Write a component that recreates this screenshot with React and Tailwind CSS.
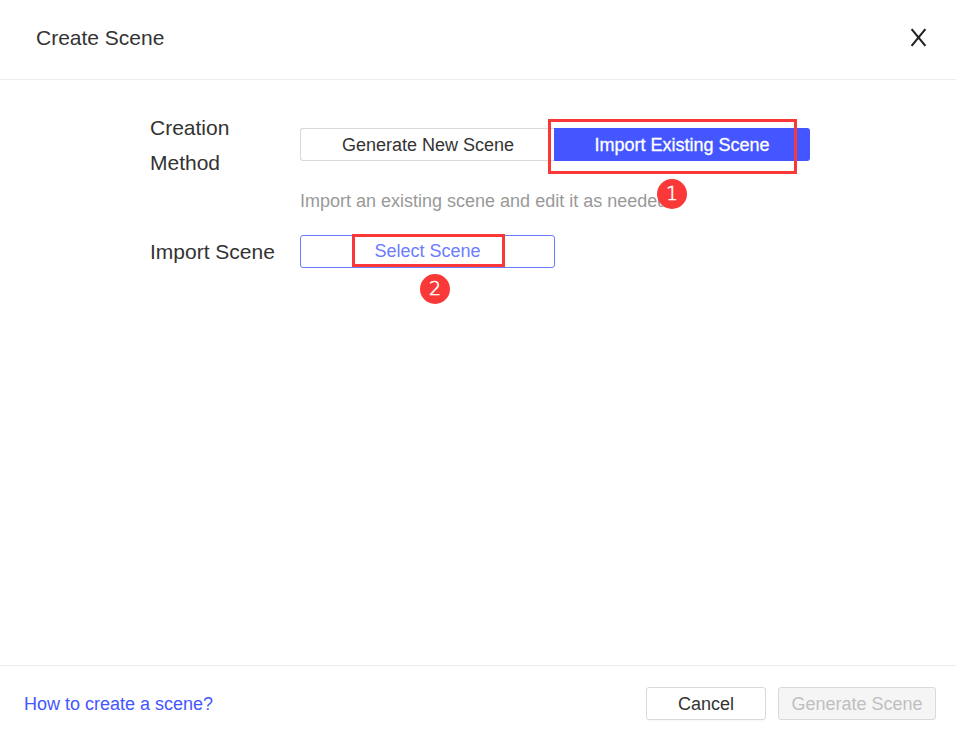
// src/App.jsx
import React from 'react';

// Red outline drawn over the control a step refers to
function Highlight({ className }) {
  return <div className={`pointer-events-none absolute border-3 border-[#fb3838] ${className}`} />;
}

// Numbered step marker
function StepBadge({ number, className }) {
  return (
    <div
      className={`absolute flex h-[30px] w-[30px] items-center justify-center rounded-full bg-[#fb3838] pb-0.5 font-['DejaVu_Sans',sans-serif] text-[19px] leading-none font-extralight text-white [-webkit-text-stroke:0.6px_white] ${className}`}
    >
      {number}
    </div>
  );
}

function Header() {
  return (
    <header className="flex h-20 items-center justify-between border-b border-[#ececec] pr-[29px] pb-1 pl-9">
      <h1 className="text-[21px] leading-8">Create Scene</h1>
      <button type="button" aria-label="Close">
        <svg width="17" height="19" viewBox="0 0 17 19" fill="none" stroke="#222" strokeWidth="2.1">
          <path d="M1.6 1.2 15.4 17.8M15.4 1.2 1.6 17.8" />
        </svg>
      </button>
    </header>
  );
}

function CreationMethod() {
  return (
    <div className="flex">
      <div className="w-[150px] pr-10 text-[21px] leading-[35px]">Creation Method</div>
      <div className="w-[510px] pt-[18px]">
        <div className="relative flex h-[33px]">
          <button type="button" className="w-[254px] rounded-l-[3px] border border-r-0 border-[#d9d9d9] pl-px">
            Generate New Scene
          </button>
          <button type="button" className="flex-1 rounded-r-[3px] bg-[#4456ff] text-white [-webkit-text-stroke:0.3px_white]">
            Import Existing Scene
          </button>
          <Highlight className="top-[-9px] left-[248px] h-[55px] w-[249px]" />
          <StepBadge number={1} className="top-[51px] left-[357px]" />
        </div>
        <p className="mt-[26px] leading-7 text-[#999]">Import an existing scene and edit it as needed.</p>
      </div>
    </div>
  );
}

function ImportScene() {
  return (
    <div className="mt-[19px] flex items-center">
      <div className="w-[150px] text-[21px] leading-[35px]">Import Scene</div>
      <div className="relative h-[33px] w-[255px]">
        <button type="button" className="h-full w-full rounded-[3px] border border-[#6b7cff] pb-0.5 text-[#6b7cff]">
          Select Scene
        </button>
        <Highlight className="top-[-1px] left-[52px] h-[33px] w-[153px]" />
        <StepBadge number={2} className="top-[39px] left-[120px]" />
      </div>
    </div>
  );
}

function Footer() {
  return (
    <footer className="flex h-[68px] items-center justify-between border-t border-[#ececec] pt-2 pr-5 pl-6">
      <a href="#" className="text-[#4456ff]">How to create a scene?</a>
      <div className="flex gap-3">
        <button type="button" className="h-[33px] w-[120px] rounded-[3px] border border-[#d9d9d9] shadow-[0_2px_0_rgba(0,0,0,0.02)]">
          Cancel
        </button>
        <button type="button" disabled className="h-[33px] w-[158px] rounded-[3px] border border-[#d9d9d9] bg-[#f5f5f5] text-[#bfbfbf]">
          Generate Scene
        </button>
      </div>
    </footer>
  );
}

function App() {
  return (
    <div className="flex h-[733px] w-[956px] flex-col bg-white font-['Liberation_Sans',Arial,sans-serif] text-lg text-[#333]">
      <Header />
      <main className="flex-1 pt-[30px] pl-[150px]">
        <CreationMethod />
        <ImportScene />
      </main>
      <Footer />
    </div>
  );
}

export default App;
